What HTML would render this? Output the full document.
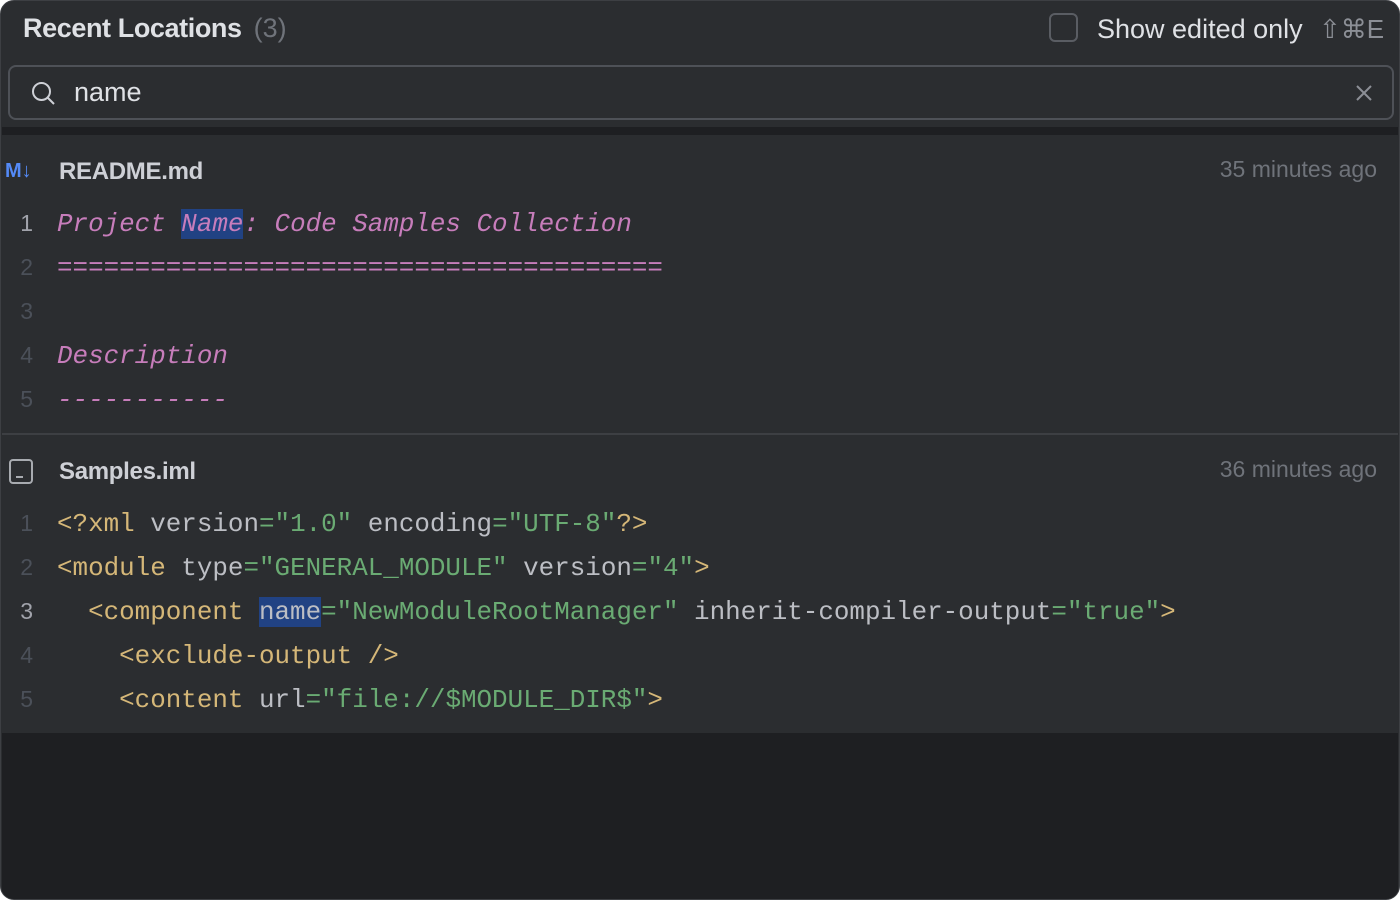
<!DOCTYPE html>
<html><head><meta charset="utf-8"><style>
html,body{margin:0;padding:0;background:#fff;}
.panel{position:absolute;left:0;top:0;width:1398px;height:898px;background:#2b2d30;border:1px solid #3d3f43;border-radius:14px;overflow:hidden;font-family:"Liberation Sans",sans-serif;}
.title{position:absolute;left:22px;top:12px;font-size:27px;font-weight:bold;color:#dfe1e5;letter-spacing:-0.4px;}
.title span{font-weight:normal;color:#6f737a;margin-left:12px;letter-spacing:0;}
.cb{position:absolute;left:1048px;top:12px;width:29px;height:29px;border:2px solid #5a5d63;border-radius:6px;box-sizing:border-box;}
.show{position:absolute;left:1096px;top:13px;font-size:27px;color:#dfe1e5;}
.sc{position:absolute;left:1318px;top:13px;font-size:26px;color:#8c8f96;}
.search{position:absolute;left:7px;top:64px;width:1386px;height:55px;border:2px solid #4e5157;border-radius:8px;box-sizing:border-box;}
.search .q{position:absolute;left:64px;top:10px;font-size:27px;color:#dfe1e5;}
.bar{position:absolute;left:1px;top:126px;width:1396px;height:8px;background:#1e1f22;}
.fname{position:absolute;font-size:24px;font-weight:bold;color:#ced0d6;letter-spacing:-0.3px;}
.time{position:absolute;right:22px;font-size:23px;color:#6f737a;}
.code{position:absolute;left:0;font-family:"Liberation Mono",monospace;font-size:25.9px;line-height:44px;}
.code>div{white-space:pre;height:44px;}
.ln{display:inline-block;width:32px;text-align:right;color:#4b5059;margin-right:24px;font-family:"Liberation Sans",sans-serif;font-size:23px;}
.ln.a{color:#a1a3ab;}
.md{color:#c77dbb;font-style:italic;}
.t{color:#d5b778;}.at{color:#bcbec4;}.s{color:#6aab73;}
.hl{background:#214283;}
.sep{position:absolute;left:1px;top:432px;width:1396px;height:2px;background:#3d3f43;}
.empty{position:absolute;left:1px;top:732px;width:1396px;height:170px;background:#1e1f22;}
</style></head><body>
<div class="panel">
<div class="title">Recent Locations<span>(3)</span></div>
<div class="cb"></div>
<div class="show">Show edited only</div>
<div class="sc">⇧⌘E</div>
<div class="search">
<svg style="position:absolute;left:20px;top:13px" width="28" height="28" viewBox="0 0 28 28"><circle cx="11.5" cy="11.5" r="8.5" fill="none" stroke="#ced0d6" stroke-width="2"/><line x1="17.5" y1="17.5" x2="24" y2="24" stroke="#ced0d6" stroke-width="2"/></svg>
<div class="q">name</div>
<svg style="position:absolute;right:20px;top:18px" width="16" height="16" viewBox="0 0 16 16"><path d="M1 1L15 15M15 1L1 15" stroke="#8c8f96" stroke-width="2"/></svg>
</div>
<div class="bar"></div>

<div style="position:absolute;left:4px;top:159px;font-size:20px;font-weight:bold;color:#548af7;">M↓</div>
<div class="fname" style="left:58px;top:157px">README.md</div>
<div class="time" style="top:155px">35 minutes ago</div>
<div class="code" style="top:200px"><div><span class="ln a">1</span><span class="md">Project <span class="hl">Name</span>: Code Samples Collection</span></div><div><span class="ln">2</span><span class="md">=======================================</span></div><div><span class="ln">3</span></div><div><span class="ln">4</span><span class="md">Description</span></div><div><span class="ln">5</span><span class="md">-----------</span></div></div>
<div class="sep"></div>

<div style="position:absolute;left:8px;top:458px;width:24px;height:25px;border:2px solid #a8abb0;border-radius:4px;box-sizing:border-box;"><div style="position:absolute;left:5px;top:15px;width:7px;height:2px;background:#a8abb0"></div></div>
<div class="fname" style="left:58px;top:457px">Samples.iml</div>
<div class="time" style="top:455px">36 minutes ago</div>
<div class="code" style="top:500px"><div><span class="ln">1</span><span class="t">&lt;?xml </span><span class="at">version</span><span class="s">="1.0"</span> <span class="at">encoding</span><span class="s">="UTF-8"</span><span class="t">?&gt;</span></div><div><span class="ln">2</span><span class="t">&lt;module </span><span class="at">type</span><span class="s">="GENERAL_MODULE"</span> <span class="at">version</span><span class="s">="4"</span><span class="t">&gt;</span></div><div><span class="ln a">3</span><span class="t">  &lt;component </span><span class="at hl">name</span><span class="s">="NewModuleRootManager"</span> <span class="at">inherit-compiler-output</span><span class="s">="true"</span><span class="t">&gt;</span></div><div><span class="ln">4</span><span class="t">    &lt;exclude-output /&gt;</span></div><div><span class="ln">5</span><span class="t">    &lt;content </span><span class="at">url</span><span class="s">="file://$MODULE_DIR$"</span><span class="t">&gt;</span></div></div>
<div class="empty"></div>
</div>
</body></html>
